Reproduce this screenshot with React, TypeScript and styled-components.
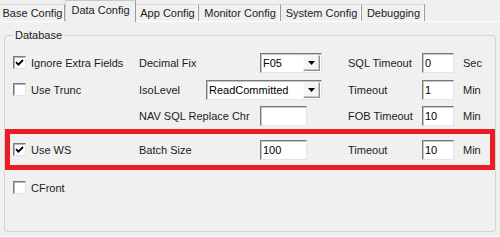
import styled, { createGlobalStyle } from 'styled-components'

const GlobalStyle = createGlobalStyle`
  html, body {
    margin: 0;
    padding: 0;
    background: #f0f0f0;
  }
  * {
    box-sizing: border-box;
  }
`

const Window = styled.div`
  width: 500px;
  height: 237px;
  overflow: hidden;
  display: flex;
  flex-direction: column;
  background: #f0f0f0;
  font-family: "Liberation Sans", Arial, sans-serif;
  font-size: 11px;
  color: #1b1b1b;
`

const TabStrip = styled.div`
  display: flex;
  align-items: flex-end;
  height: 21px;
  position: relative;
  z-index: 1;
`

const Tab = styled.div<{ $w: number; $active?: boolean }>`
  width: ${p => p.$w}px;
  height: ${p => (p.$active ? 22 : 17)}px;
  margin-bottom: ${p => (p.$active ? -1 : 0)}px;
  display: flex;
  align-items: center;
  justify-content: center;
  padding-bottom: ${p => (p.$active ? 3 : 0)}px;
  background: #f0f0f0;
  border-top: 1px solid ${p => (p.$active ? '#c9c9c9' : '#dadada')};
  border-left: 1px solid ${p => (p.$active ? '#d4d4d4' : 'transparent')};
  border-right: 1px solid #9c9c9c;
  box-shadow: ${p => (p.$active ? 'none' : 'inset -1px 0 0 #fcfcfc')};
  white-space: nowrap;
`

const Panel = styled.div`
  flex: 1;
  border-top: 1px solid #fdfdfd;
  border-bottom: 1px solid #fcfcfc;
  padding: 13px 4px 0 4px;
`

const Group = styled.div`
  position: relative;
  height: 197px;
  border: 1px solid #d3d3d3;
  border-radius: 3px;
  padding-top: 13px;
`

const Legend = styled.span`
  position: absolute;
  top: -7px;
  left: 8px;
  padding: 0 2px;
  line-height: 13px;
  background: #f0f0f0;
`

const Row = styled.div<{ $h: number }>`
  display: grid;
  grid-template-columns: 126px 67px 54px 88px 74px 41px auto;
  align-items: center;
  height: ${p => p.$h}px;
  padding-left: 8px;
`

const HighlightRow = styled(Row)`
  border: 5px solid #ed1c24;
  padding-left: 3px;
`

const Label = styled.span<{ $span?: number }>`
  grid-column: span ${p => p.$span ?? 1};
  white-space: nowrap;
`

const CheckCell = styled.label`
  display: flex;
  align-items: center;
  gap: 5px;
  white-space: nowrap;
`

const Box = styled.span`
  width: 13px;
  height: 13px;
  display: flex;
  align-items: center;
  justify-content: center;
  background: #fff;
  border: 1px solid;
  border-color: #7a7a7a #e4e4e4 #e4e4e4 #7a7a7a;
  box-shadow: inset 1px 1px 0 #b4b4b4;
`

const Field = styled.div<{ $w: number; $span?: number }>`
  grid-column: span ${p => p.$span ?? 1};
  width: ${p => p.$w}px;
  height: 20px;
  display: flex;
  align-items: center;
  background: #fff;
  border: 1px solid;
  border-color: #7a7a7a #e3e3e3 #e3e3e3 #7a7a7a;
  box-shadow: inset 1px 1px 0 #c4c4c4;
  padding-left: 2px;
  color: #000;
`

const Combo = styled(Field)`
  justify-content: space-between;
  padding-right: 1px;
`

const DropButton = styled.span`
  width: 17px;
  height: 16px;
  display: flex;
  align-items: center;
  justify-content: center;
  background: #f4f4f4;
  border: 1px solid;
  border-color: #fdfdfd #8e8e8e #8e8e8e #fdfdfd;
  box-shadow: inset -1px -1px 0 #c8c8c8;
`

const Empty = styled.span``

function Check({ checked, children }: { checked?: boolean; children: string }) {
  return (
    <CheckCell>
      <Box>
        {checked && (
          <svg width="9" height="9" viewBox="0 0 9 9">
            <path d="M1 4.2 L3.4 6.6 L8 2" fill="none" stroke="#000" strokeWidth="1.9" />
          </svg>
        )}
      </Box>
      {children}
    </CheckCell>
  )
}

function Dropdown({ value, w, span }: { value: string; w: number; span?: number }) {
  return (
    <Combo $w={w} $span={span}>
      {value}
      <DropButton>
        <svg width="7" height="4" viewBox="0 0 7 4">
          <path d="M0 0 H7 L3.5 4 Z" fill="#000" />
        </svg>
      </DropButton>
    </Combo>
  )
}

const tabs = [
  { name: 'Base Config', w: 65 },
  { name: 'Data Config', w: 71, active: true },
  { name: 'App Config', w: 63 },
  { name: 'Monitor Config', w: 82 },
  { name: 'System Config', w: 81 },
  { name: 'Debugging', w: 63 },
]

export default function App() {
  return (
    <Window>
      <GlobalStyle />
      <TabStrip>
        {tabs.map(t => (
          <Tab key={t.name} $w={t.w} $active={t.active}>
            {t.name}
          </Tab>
        ))}
      </TabStrip>

      <Panel>
        <Group>
          <Legend>Database</Legend>

          <Row $h={27}>
            <Check checked>Ignore Extra Fields</Check>
            <Label $span={2}>Decimal Fix</Label>
            <Dropdown value="F05" w={62} />
            <Label>SQL Timeout</Label>
            <Field $w={32}>0</Field>
            <Label>Sec</Label>
          </Row>

          <Row $h={27}>
            <Check>Use Trunc</Check>
            <Label>IsoLevel</Label>
            <Dropdown value="ReadCommitted" w={116} span={2} />
            <Label>Timeout</Label>
            <Field $w={32}>1</Field>
            <Label>Min</Label>
          </Row>

          <Row $h={26}>
            <Empty />
            <Label $span={2}>NAV SQL Replace Chr</Label>
            <Field $w={47} />
            <Label>FOB Timeout</Label>
            <Field $w={32}>10</Field>
            <Label>Min</Label>
          </Row>

          <HighlightRow $h={41}>
            <Check checked>Use WS</Check>
            <Label $span={2}>Batch Size</Label>
            <Field $w={47}>100</Field>
            <Label>Timeout</Label>
            <Field $w={32}>10</Field>
            <Label>Min</Label>
          </HighlightRow>

          <Row $h={35}>
            <Check>CFront</Check>
          </Row>
        </Group>
      </Panel>
    </Window>
  )
}
